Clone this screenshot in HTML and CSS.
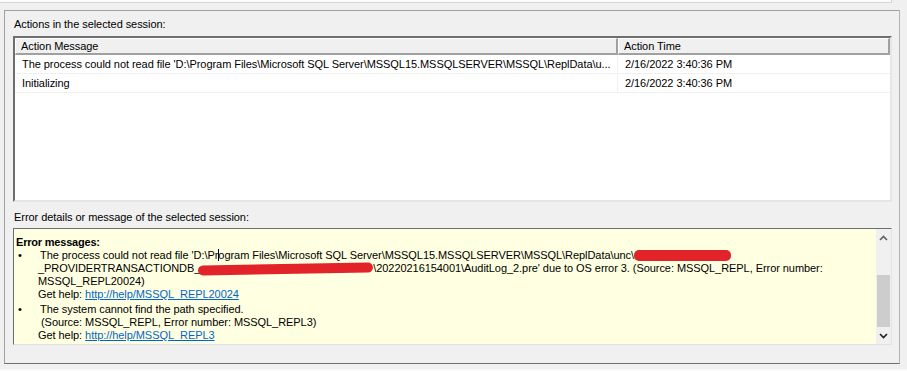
FILE: index.html
```html
<!DOCTYPE html>
<html>
<head>
<meta charset="utf-8">
<link rel="stylesheet" href="styles.css">
</head>
<body>
<div class="topstrip"></div>
<div class="group">
  <div class="label">Actions in the selected session:</div>
  <div class="listview">
    <div class="lv-head">
      <div class="hcell c1">Action Message</div>
      <div class="hcell c2">Action Time</div>
    </div>
    <div class="lv-row">
      <div class="cell c1">The process could not read file 'D:\Program Files\Microsoft SQL Server\MSSQL15.MSSQLSERVER\MSSQL\ReplData\u...</div>
      <div class="cell c2">2/16/2022 3:40:36 PM</div>
    </div>
    <div class="lv-row">
      <div class="cell c1">Initializing</div>
      <div class="cell c2">2/16/2022 3:40:36 PM</div>
    </div>
  </div>
  <div class="label label2">Error details or message of the selected session:</div>
  <div class="details">
    <div class="details-content">
      <div class="heading">Error messages:</div>
      <div class="item">
        <span class="bullet">•</span>
        <div class="item-text">
          <div class="first">The process could not read file 'D:\Pr<span class="caret"></span>ogram Files\Microsoft SQL Server\MSSQL15.MSSQLSERVER\MSSQL\ReplData\unc\<span class="redact r1"></span></div>
          <div>_PROVIDERTRANSACTIONDB_<span class="redact r2"></span>\20220216154001\AuditLog_2.pre' due to OS error 3. (Source: MSSQL_REPL, Error number:</div>
          <div>MSSQL_REPL20024)</div>
          <div>Get help: <a class="link" href="#">http://help/MSSQL_REPL20024</a></div>
        </div>
      </div>
      <div class="item item2">
        <span class="bullet">•</span>
        <div class="item-text">
          <div class="first">The system cannot find the path specified.</div>
          <div>&nbsp;(Source: MSSQL_REPL, Error number: MSSQL_REPL3)</div>
          <div>Get help: <a class="link" href="#">http://help/MSSQL_REPL3</a></div>
        </div>
      </div>
    </div>
    <div class="vscroll">
      <div class="arrow"><svg width="9" height="6" viewBox="0 0 9 6"><path d="M1 5 L4.5 1.5 L8 5" fill="none" stroke="#606060" stroke-width="1.6"/></svg></div>
      <div class="track"><div class="thumb"></div></div>
      <div class="arrow"><svg width="9" height="6" viewBox="0 0 9 6"><path d="M1 1 L4.5 4.5 L8 1" fill="none" stroke="#202020" stroke-width="1.6"/></svg></div>
    </div>
  </div>
</div>
<div class="bottomband"></div>
</body>
</html>
```

FILE: styles.css
```css
html, body {
  margin: 0;
  padding: 0;
}
body {
  background: #f0f0f0;
  font-family: "Liberation Sans", Arial, sans-serif;
  font-size: 11px;
  letter-spacing: -0.06px;
  color: #000;
  width: 907px;
  height: 371px;
  overflow: hidden;
}
.topstrip {
  width: 891px;
  height: 2px;
  background: #fbfbfb;
  border-bottom: 1px solid #d6d6d6;
  border-right: 1px solid #d6d6d6;
}
.group {
  margin-top: 7px;
  margin-left: 4px;
  width: 894px;
  height: 336px;
  border-top: 1px solid #a0a0a0;
  border-left: 1px solid #a0a0a0;
  border-right: 1px solid #b4b4b4;
  border-bottom: 1px solid #707070;
  padding: 7px 0 9px 0;
}
.label {
  height: 13px;
  line-height: 13px;
  margin-left: 9px;
  white-space: nowrap;
}
.listview {
  margin: 5px 0 0 8px;
  width: 875px;
  height: 162px;
  background: #fff;
  border-top: 2px solid #6e6e6e;
  border-left: 2px solid #6e6e6e;
  border-right: 2px solid #e6e6e6;
  border-bottom: 2px solid #e6e6e6;
}
.lv-head {
  display: flex;
  height: 17px;
}
.hcell {
  box-sizing: border-box;
  height: 17px;
  line-height: 15px;
  background: #f0f0f0;
  border-top: 1px solid #ffffff;
  border-left: 1px solid #ffffff;
  border-right: 2px solid #a0a0a0;
  border-bottom: 2px solid #a0a0a0;
  padding-left: 5px;
  white-space: nowrap;
}
.c1 {
  width: 603px;
  flex: none;
}
.c2 {
  flex: 1;
}
.lv-row {
  display: flex;
  height: 19px;
  border-bottom: 1px solid #f0f0f0;
  box-sizing: border-box;
}
.lv-row .cell {
  line-height: 19px;
  padding-left: 7px;
  white-space: nowrap;
  overflow: hidden;
  box-sizing: border-box;
}
.lv-row .c1 {
  border-right: 1px solid #f0f0f0;
}
.lv-row .c2 {
  padding-left: 7px;
}
.label2 {
  margin-top: 9px;
}
.details {
  margin: 4px 0 0 8px;
  width: 877px;
  height: 115px;
  display: flex;
  background: #ffffe1;
  border-top: 1px solid #6e6e6e;
  border-left: 1px solid #6e6e6e;
  border-right: 1px solid #e3e3e3;
  border-bottom: 1px solid #e3e3e3;
}
.details-content {
  flex: 1;
  padding: 7px 0 0 2px;
  line-height: 13px;
  white-space: nowrap;
  overflow: hidden;
}
.heading {
  font-weight: bold;
  letter-spacing: -0.2px;
}
.item {
  display: flex;
}
.item2 {
  margin-top: 2px;
}
.bullet {
  width: 20px;
  padding-left: 2px;
  flex: none;
}
.item-text .first {
  text-indent: 2px;
}
.link {
  color: #0066cc;
  text-decoration: underline;
}
.caret {
  display: inline-block;
  width: 1px;
  height: 12px;
  background: #000;
  vertical-align: -2px;
  margin: 0 -1px 0 0;
}
.redact {
  display: inline-block;
  background: #e2232a;
  border-radius: 5px;
  vertical-align: middle;
}
.r1 {
  width: 97px;
  height: 11px;
  margin-top: -2px;
}
.r2 {
  width: 175px;
  height: 10px;
  margin-left: -2px;
  transform: rotate(-1deg);
}
.vscroll {
  width: 15px;
  flex: none;
  display: flex;
  flex-direction: column;
  background: #f0f0f0;
}
.arrow {
  height: 17px;
  display: flex;
  align-items: center;
  justify-content: center;
  flex: none;
}
.track {
  flex: 1;
  display: flex;
  flex-direction: column;
  justify-content: flex-end;
  align-items: center;
}
.thumb {
  width: 13px;
  height: 52px;
  background: #cdcdcd;
}
.bottomband {
  margin-top: 5px;
  height: 11px;
  background: #f9f9f9;
}
```
